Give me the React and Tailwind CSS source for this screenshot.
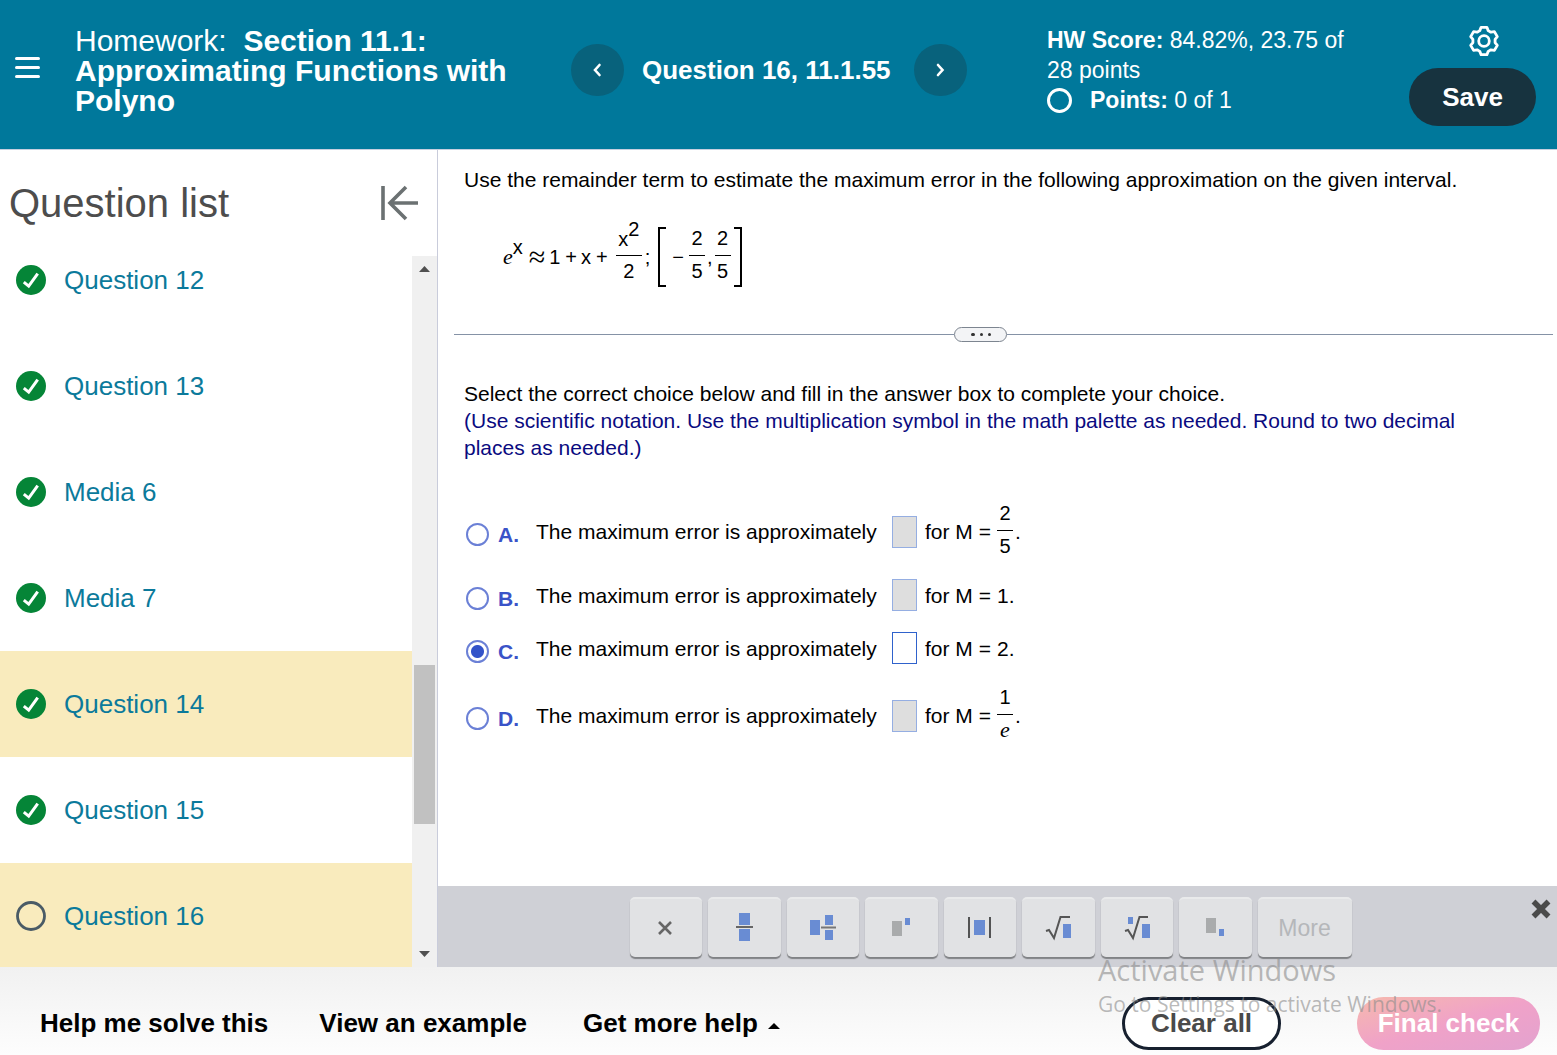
import { useState } from "react";

const questions = [
  { name: "Question 12", done: true },
  { name: "Question 13", done: true },
  { name: "Media 6", done: true },
  { name: "Media 7", done: true },
  { name: "Question 14", done: true, highlight: true },
  { name: "Question 15", done: true },
  { name: "Question 16", done: false, highlight: true },
];

function Fraction({ top, bottom, wide }) {
  return (
    <span className="mb-0.5 flex flex-col items-center text-xl">
      <span className="h-[30px] leading-[26px]">{top}</span>
      <span className={`h-px bg-black ${wide ? "w-[26px]" : "w-4"}`} />
      <span className="h-[30px] leading-[30px]">{bottom}</span>
    </span>
  );
}

const E = () => (
  <i className="font-['Liberation_Serif',serif] text-[22px]">e</i>
);

const choices = [
  { id: "A", value: <Fraction top="2" bottom="5" />, fraction: true },
  { id: "B", value: "1", space: "mt-[17px]" },
  { id: "C", value: "2", space: "mt-[21px]" },
  { id: "D", value: <Fraction top="1" bottom={<E />} />, fraction: true, space: "mt-[21px]" },
];

function StatusIcon({ done }) {
  if (!done) {
    return (
      <svg width="30" height="30" viewBox="0 0 30 30" fill="none" className="shrink-0">
        <circle cx="15" cy="15" r="13.5" stroke="#4a5b66" strokeWidth="2.8" />
      </svg>
    );
  }
  return (
    <svg width="30" height="30" viewBox="0 0 30 30" fill="none" className="shrink-0">
      <circle cx="15" cy="15" r="15" fill="#058537" />
      <path d="M7.8 17.2l4.900 4L21.700 8.600" stroke="#fff" strokeWidth="3" />
    </svg>
  );
}

// Gear outline: six teeth around the centre
const gearPoints = [0, 1, 2, 3, 4, 5]
  .flatMap((k) =>
    [
      [-22, 11.2],
      [-12, 14],
      [12, 14],
      [22, 11.2],
    ].map(([offset, r]) => {
      const a = ((k * 60 - 90 + offset) * Math.PI) / 180;
      return `${(16 + r * Math.cos(a)).toFixed(2)},${(16 + r * Math.sin(a)).toFixed(2)}`;
    })
  )
  .join(" ");

// Templates on the math palette
const B = "#698cd3";
const palette = [
  {
    label: "Multiply",
    art: <path d="M17 18l12 12M29 18L17 30" stroke="#666" strokeWidth="2.6" />,
  },
  {
    label: "Fraction",
    art: (
      <>
        <path d="M19 9h11v12H19zM19 25h11v12H19z" fill={B} />
        <path d="M16 23h17" stroke="#666" strokeWidth="2" />
      </>
    ),
  },
  {
    label: "Mixed number",
    art: (
      <>
        <path d="M11 16h10v15H11zM26 11h8v10h-8zM26 26h8v10h-8z" fill={B} />
        <path d="M22 23.5h15" stroke="#777" strokeWidth="2" />
      </>
    ),
  },
  {
    label: "Exponent",
    art: (
      <>
        <path d="M15 17h10v15H15z" fill="#a9abac" />
        <path d="M28 14h5v7h-5z" fill={B} />
      </>
    ),
  },
  {
    label: "Absolute value",
    art: (
      <>
        <path d="M18 16h11v15H18z" fill={B} />
        <path d="M13 13v21M34 13v21" stroke="#444" strokeWidth="1.8" />
      </>
    ),
  },
  {
    label: "Square root",
    art: (
      <>
        <path d="M29 20h8v14h-8z" fill={B} />
        <path d="M12 27l3-1 5 8 6.500-21H36" stroke="#555" strokeWidth="2" />
      </>
    ),
  },
  {
    label: "Root",
    art: (
      <>
        <path d="M29 20h8v14h-8zM15 13h5v7h-5z" fill={B} />
        <path d="M12 27l3-1 5 8 6.500-21H35" stroke="#555" strokeWidth="2" />
      </>
    ),
  },
  {
    label: "Subscript",
    art: (
      <>
        <path d="M15 14h10v15H15z" fill="#a9abac" />
        <path d="M28 25h5v7h-5z" fill={B} />
      </>
    ),
  },
];

const keyStyle =
  "h-[60px] rounded-[5px] bg-[#e1e2e4] border-t-2 border-[#e9eaeb] shadow-[0_2px_1px_#808285] flex items-center justify-center";

function Header() {
  return (
    <header className="flex h-[150px] shrink-0 items-start border-b border-[#c6cfdf] bg-[#00789b] text-white">
      <button aria-label="Menu" className="ml-[15px] mt-[57px] flex w-[25px] flex-col gap-1.5">
        <span className="h-[3px] w-full rounded bg-white" />
        <span className="h-[3px] w-full rounded bg-white" />
        <span className="h-[3px] w-full rounded bg-white" />
      </button>

      <h1 className="ml-[35px] mt-[26px] w-[440px] text-[30px] leading-[30px]">
        Homework:&nbsp; <b>Section 11.1: Approximating Functions with Polyno</b>
      </h1>

      <nav className="ml-14 mt-11 flex items-center gap-[18px]">
        <button aria-label="Previous question" className="flex h-[52px] w-[53px] items-center justify-center rounded-full bg-[#08627c]">
          <svg width="14" height="16" viewBox="0 0 14 16" fill="none">
            <path d="M8.500 3L4 8l4.500 5" stroke="#fff" strokeWidth="2.600" strokeLinecap="round" />
          </svg>
        </button>
        <b className="w-[254px] whitespace-nowrap text-[26px] leading-[52px]">Question 16, 11.1.55</b>
        <button aria-label="Next question" className="flex h-[52px] w-[53px] items-center justify-center rounded-full bg-[#08627c]">
          <svg width="14" height="16" viewBox="0 0 14 16" fill="none">
            <path d="M4 3l4.500 5L4 13" stroke="#fff" strokeWidth="2.600" strokeLinecap="round" />
          </svg>
        </button>
      </nav>

      <div className="ml-20 mt-[25px] w-[310px] text-[23px] leading-[30px]">
        <p>
          <b>HW Score:</b> 84.82%, 23.75 of 28 points
        </p>
        <p className="flex items-center gap-[18px]">
          <span className="size-[25px] rounded-full border-[3px] border-white" />
          <span>
            <b>Points:</b> 0 of 1
          </span>
        </p>
      </div>

      <div className="ml-auto mr-[21px] mt-[25px] flex flex-col items-end">
        <button aria-label="Settings" className="mr-9">
          <svg width="32" height="32" viewBox="0 0 32 32" fill="none" stroke="#fff" strokeWidth="2.800" strokeLinejoin="round">
            <polygon points={gearPoints} />
            <circle cx="16" cy="16" r="5.300" />
          </svg>
        </button>
        <button className="mt-[11px] h-[58px] w-[127px] rounded-full bg-[#17333f] text-[26px] font-bold">
          Save
        </button>
      </div>
    </header>
  );
}

function Sidebar() {
  return (
    <aside className="flex w-[438px] shrink-0 flex-col border-r border-[#c9ccdb]">
      <div className="flex h-[106px] shrink-0 items-center justify-between pl-[9px] pr-[18px]">
        <h2 className="text-[40px] text-[#4d4d4d]">Question list</h2>
        <button aria-label="Collapse question list">
          <svg width="38" height="36" viewBox="0 0 38 36" fill="none" stroke="#6b7172" strokeWidth="3.600">
            <path d="M2 1v34M37 18H9M25 2L9 18l16 16" />
          </svg>
        </button>
      </div>

      <div className="flex min-h-0 flex-1">
        <ul className="flex-1 overflow-hidden">
          {questions.map((q, i) => (
            <li
              key={q.name}
              className={`${q.highlight ? "bg-[#f9ebbd]" : "bg-white"} ${i === 0 ? "-mt-[29px]" : ""}`}
            >
              <a href="#" className="flex h-[106px] items-center gap-[18px] pl-4 text-[26px] text-[#0b7a9b]">
                <StatusIcon done={q.done} />
                {q.name}
              </a>
            </li>
          ))}
        </ul>

        {/* Scroll track */}
        <div className="flex w-[25px] flex-col items-center bg-[#f0f0f0] py-[9px]">
          <svg width="11" height="7" viewBox="0 0 11 7">
            <path d="M0 7l5.500-6L11 7z" fill="#505050" />
          </svg>
          <div className="grow-[393]" />
          <div className="h-[159px] w-[21px] bg-[#c1c1c1]" />
          <div className="grow-[127]" />
          <svg width="11" height="7" viewBox="0 0 11 7">
            <path d="M0 0l5.500 6L11 0z" fill="#505050" />
          </svg>
        </div>
      </div>
    </aside>
  );
}

function Formula() {
  return (
    <div className="ml-[39px] mt-[33px] flex h-[61px] items-center text-xl leading-[30px]">
      <span>
        <E />
        <sup className="text-xl">x</sup>
      </span>
      <span className="ml-1.5 font-['Liberation_Serif',serif] text-[30px]">≈</span>
      <span className="ml-1">1</span>
      <span className="ml-[5px]">+</span>
      <span className="ml-1">x</span>
      <span className="ml-[5px]">+</span>
      <span className="ml-2">
        <Fraction wide top={<>x<sup className="text-xl">2</sup></>} bottom="2" />
      </span>
      <span className="ml-[3px]">;</span>
      <span className="ml-2 h-[60px] w-2 border-2 border-r-0 border-black" />
      <span className="ml-1.5">−</span>
      <span className="ml-[5px] flex items-center">
        <Fraction top="2" bottom="5" />
        <span className="mx-0.5">,</span>
        <Fraction top="2" bottom="5" />
      </span>
      <span className="ml-[3px] h-[60px] w-2 border-2 border-l-0 border-black" />
    </div>
  );
}

function Choices() {
  const [picked, setPicked] = useState("C");

  return (
    <fieldset className="mt-10">
      {choices.map((c) => (
        <div key={c.id} className={`flex items-center ${c.fraction ? "h-[61px]" : "h-8"} ${c.space || ""}`}>
          <label className="mt-1.5 flex w-[72px] items-center gap-[9px] pl-0.5 font-bold text-[#3a53c8]">
            <input
              type="radio"
              name="choice"
              checked={picked === c.id}
              onChange={() => setPicked(c.id)}
              className="size-[23px] appearance-none rounded-full border-2 border-[#6b80d6] bg-white checked:bg-[radial-gradient(circle,#3353c9_6px,#fff_7px)]"
            />
            {c.id}.
          </label>
          <span className="w-[348px] whitespace-nowrap">The maximum error is approximately</span>
          <input
            aria-label={`Answer for choice ${c.id}`}
            disabled={picked !== c.id}
            className="mx-2 h-8 w-[25px] border border-[#2f62cc] bg-white disabled:border-[#95aee2] disabled:bg-[#dedede]"
          />
          <span>for M =</span>
          <span className="ml-1.5">{c.value}</span>
          <span className={c.fraction ? "ml-0.5" : ""}>.</span>
        </div>
      ))}
    </fieldset>
  );
}

function Palette() {
  return (
    <div className="flex h-[81px] shrink-0 items-start bg-[#cfd0d6] pl-3 pt-[11px]">
      <div className="flex flex-1 justify-center">
        <div className="grid w-[722px] grid-cols-[repeat(8,1fr)_94px] gap-[6px]">
          {palette.map((p) => (
            <button key={p.label} aria-label={p.label} className={keyStyle}>
              <svg width="48" height="48" viewBox="0 0 48 48" fill="none">
                {p.art}
              </svg>
            </button>
          ))}
          <button className={`${keyStyle} text-[23px] text-[#b5b7ba]`}>More</button>
        </div>
      </div>
      <button aria-label="Close palette" className="mr-[6px] mt-[2px]">
        <svg width="20" height="20" viewBox="0 0 20 20">
          <path d="M2.500 2.500l15 15M17.500 2.500l-15 15" stroke="#4a4a4a" strokeWidth="5.500" />
        </svg>
      </button>
    </div>
  );
}

function Footer() {
  return (
    <footer className="relative flex h-[88px] shrink-0 items-center bg-gradient-to-b from-[#f1f1f1] to-[#fdfdfd] pl-10 pr-[17px] pt-6 text-[26px] font-bold text-black">
      <button>Help me solve this</button>
      <button className="ml-[51px]">View an example</button>
      <button className="ml-14 flex items-center gap-2.5">
        Get more help
        <svg width="12" height="6" viewBox="0 0 12 6" className="mt-1.5">
          <path d="M0 6l6-6 6 6z" />
        </svg>
      </button>
      <button className="ml-auto h-[53px] w-[159px] rounded-full border-[3px] border-[#17202f] bg-white text-[#4a4a4a]">
        Clear all
      </button>
      <button className="ml-[76px] h-[53px] w-[183px] rounded-full bg-gradient-to-br from-[#f6b9ac] via-[#f0a2c8] to-[#e3a2cf] text-white">
        Final check
      </button>

      {/* Activation notice floats over everything */}
      <div className="pointer-events-none absolute -top-3.5 right-[118px] w-[341px] whitespace-nowrap font-['Open_Sans',sans-serif] font-normal text-[#8c8c8c]/60">
        <p className="text-[29px] leading-[34px]">Activate Windows</p>
        <p className="text-[21px] leading-[34px]">Go to Settings to activate Windows.</p>
      </div>
    </footer>
  );
}

export default function App() {
  return (
    <div className="flex h-screen flex-col overflow-hidden bg-white font-['Liberation_Sans',Arial,sans-serif]">
      <Header />

      <div className="flex min-h-0 flex-1">
        <Sidebar />

        <main className="flex min-w-0 flex-1 flex-col">
          <div className="min-h-0 flex-1 overflow-hidden pl-[26px] pt-4 text-[21px] leading-[27px] text-black">
            <p>
              Use the remainder term to estimate the maximum error in the following approximation on the given interval.
            </p>
            <Formula />

            {/* Splitter */}
            <div className="-ml-[10px] mr-1 mt-10 flex items-center">
              <div className="h-px grow-[500] bg-[#8592a6]" />
              <button
                aria-label="Resize panels"
                className="flex h-[15px] w-[53px] items-center justify-center gap-[5px] rounded-full border border-[#7d8590] bg-[#f3f4f6]"
              >
                <span className="h-[3px] w-1 rounded-full bg-[#333]" />
                <span className="size-[3px] rounded-full bg-[#333]" />
                <span className="size-[3px] rounded-full bg-[#333]" />
              </button>
              <div className="h-px grow-[546] bg-[#8592a6]" />
            </div>

            <div className="mt-[38px] pr-10">
              <p>Select the correct choice below and fill in the answer box to complete your choice.</p>
              <p className="text-[#0a0a80]">
                (Use scientific notation. Use the multiplication symbol in the math palette as needed. Round to two
                decimal places as needed.)
              </p>
            </div>
            <Choices />
          </div>

          <Palette />
        </main>
      </div>

      <Footer />
    </div>
  );
}
